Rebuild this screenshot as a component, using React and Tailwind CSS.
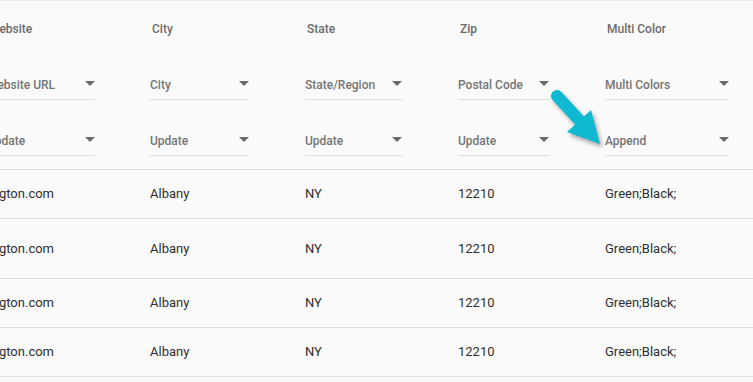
import React from "react";

const cols = [
  { w: "w-[163px]", label: "Website", dd1: "Website URL", dd2: "Update", ddw: "w-[108px]", val: "www.burlington.com" },
  { w: "w-[155px]", label: "City", dd1: "City", dd2: "Update", ddw: "w-[99px]", val: "Albany" },
  { w: "w-[153px]", label: "State", dd1: "State/Region", dd2: "Update", ddw: "w-[97px]", val: "NY" },
  { w: "w-[147px]", label: "Zip", dd1: "Postal Code", dd2: "Update", ddw: "w-[91px]", val: "12210" },
  { w: "flex-1", label: "Multi Color", dd1: "Multi Colors", dd2: "Append", ddw: "w-[124px]", val: "Green;Black;" },
];

function Dropdown({ text, w }) {
  return (
    <div className={`${w} h-[29px] flex items-center justify-between border-b border-[#dcdcdc] text-[12px] font-medium text-[#757575] whitespace-nowrap`}>
      <span>{text}</span>
      <span className="w-0 h-0 border-l-[5px] border-r-[5px] border-t-[5px] border-l-transparent border-r-transparent border-t-[#6b6b6b] mb-[3px]" />
    </div>
  );
}

const rowHeights = ["h-[49px]", "h-[60px]", "h-[49px]", "h-[49px]"];

export default function App() {
  return (
    <div className="relative w-[753px] h-[382px] overflow-hidden bg-[#fafafa] font-['Roboto',sans-serif]">
      <div className="h-px bg-[#e8ebf0]" />
      <div className="ml-[-13px] border-b border-[#dedede]">
        <div className="flex h-[56px] items-center">
          {cols.map((c) => (
            <div key={c.label} className={`${c.w} pl-[2px] text-[12px] font-medium text-[#6b6b6b] whitespace-nowrap`}>
              {c.label}
            </div>
          ))}
        </div>
        <div className="flex h-[56px] pt-[14px]">
          {cols.map((c) => (
            <div key={c.label} className={c.w}>
              <Dropdown text={c.dd1} w={c.ddw} />
            </div>
          ))}
        </div>
        <div className="flex h-[56px] pt-[14px]">
          {cols.map((c) => (
            <div key={c.label} className={c.w}>
              <Dropdown text={c.dd2} w={c.ddw} />
            </div>
          ))}
        </div>
      </div>
      <div className="ml-[-13px]">
        {rowHeights.map((h, i) => (
          <div key={i} className={`flex items-center ${h} border-b border-[#dedede]`}>
            {cols.map((c, j) => (
              <div
                key={c.label}
                className={`${c.w} text-[13px] text-[#2f2f2f] whitespace-nowrap ${j === 0 ? "flex justify-end pr-[96px] overflow-hidden" : ""}`}
              >
                {j === 0 ? <span className="shrink-0">{c.val}</span> : c.val}
              </div>
            ))}
          </div>
        ))}
      </div>

      <svg
        className="absolute left-[540px] top-[80px] w-[70px] h-[75px] drop-shadow-[2px_3px_2px_rgba(0,0,0,0.35)]"
        viewBox="540 80 70 75"
      >
        <line x1="557" y1="96" x2="580" y2="121" stroke="#0fb9d1" strokeWidth="12" strokeLinecap="round" />
        <polygon points="567,132 591,110 600,144" fill="#0fb9d1" />
      </svg>
    </div>
  );
}
